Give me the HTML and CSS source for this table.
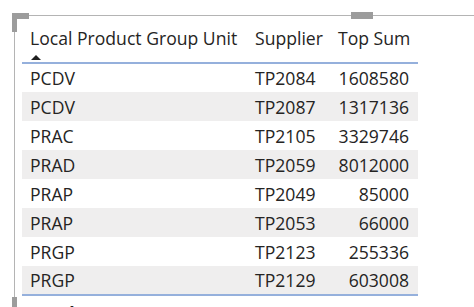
FILE: index.html
```html
<!DOCTYPE html>
<html>
<head>
<meta charset="utf-8">
<link rel="stylesheet" href="styles.css">
</head>
<body>
<div class="visual">
  <div class="handle corner-h"></div>
  <div class="handle corner-v"></div>
  <div class="handle top-mid"></div>
  <div class="handle left-mid"></div>
  <table class="grid">
    <colgroup>
      <col class="c1"><col class="c2"><col class="c3">
    </colgroup>
    <thead>
      <tr>
        <th class="left">Local Product Group Unit<span class="sort"></span></th>
        <th class="left">Supplier</th>
        <th class="num">Top Sum</th>
      </tr>
    </thead>
    <tbody>
      <tr><td>PCDV</td><td>TP2084</td><td class="num">1608580</td></tr>
      <tr class="alt"><td>PCDV</td><td>TP2087</td><td class="num">1317136</td></tr>
      <tr><td>PRAC</td><td>TP2105</td><td class="num">3329746</td></tr>
      <tr class="alt"><td>PRAD</td><td>TP2059</td><td class="num">8012000</td></tr>
      <tr><td>PRAP</td><td>TP2049</td><td class="num">85000</td></tr>
      <tr class="alt"><td>PRAP</td><td>TP2053</td><td class="num">66000</td></tr>
      <tr><td>PRGP</td><td>TP2123</td><td class="num">255336</td></tr>
      <tr class="alt"><td>PRGP</td><td>TP2129</td><td class="num">603008</td></tr>
    </tbody>
    <tfoot>
      <tr><td>Total</td><td></td><td class="num"></td></tr>
    </tfoot>
  </table>
</div>
</body>
</html>
```

FILE: styles.css
```css
html, body {
  margin: 0;
  padding: 0;
  background: #ffffff;
  overflow: hidden;
  width: 474px;
  height: 307px;
}

body {
  font-family: "Open Sans", "Noto Sans", sans-serif;
  color: #252423;
}

.visual {
  position: relative;
  margin: 15px 0 0 14px;
  border-top: 1px solid #b4b4b4;
  border-left: 1px solid #b4b4b4;
  height: 400px;
  padding: 0 0 0 7px;
}

.handle {
  position: absolute;
  background: #9c9c9c;
}

.corner-h {
  left: -3px;
  top: -3px;
  width: 17px;
  height: 6px;
}

.corner-v {
  left: -3px;
  top: -3px;
  width: 5px;
  height: 19px;
}

.top-mid {
  left: 336px;
  top: -4px;
  width: 22px;
  height: 7px;
}

.left-mid {
  left: -3px;
  top: 281px;
  width: 5px;
  height: 22px;
}

.grid {
  border-collapse: collapse;
  table-layout: fixed;
  width: 396px;
  font-size: 17.6px;
}

.c1 { width: 225px; }
.c2 { width: 83px; }
.c3 { width: 88px; }

th {
  font-weight: normal;
  vertical-align: top;
  padding: 10px 9px 0 8px;
  height: 36px;
  line-height: 24px;
  white-space: nowrap;
  border-bottom: 2px solid #95b0dc;
}

th.left { text-align: left; }

.num { text-align: right; }

.sort {
  display: block;
  width: 0;
  height: 0;
  margin: 5px 0 0 1px;
  border-left: 5px solid transparent;
  border-right: 5px solid transparent;
  border-bottom: 5px solid #1f1f1f;
}

td {
  height: 29px;
  padding: 0 9px 0 8px;
  line-height: 24px;
  white-space: nowrap;
  box-sizing: border-box;
}

tr.alt td {
  background: #efeeee;
}

tbody tr:last-child td {
  border-bottom: 2px solid #95b0dc;
}

tfoot td {
  font-weight: bold;
  vertical-align: top;
  padding-top: 5px;
}
```
